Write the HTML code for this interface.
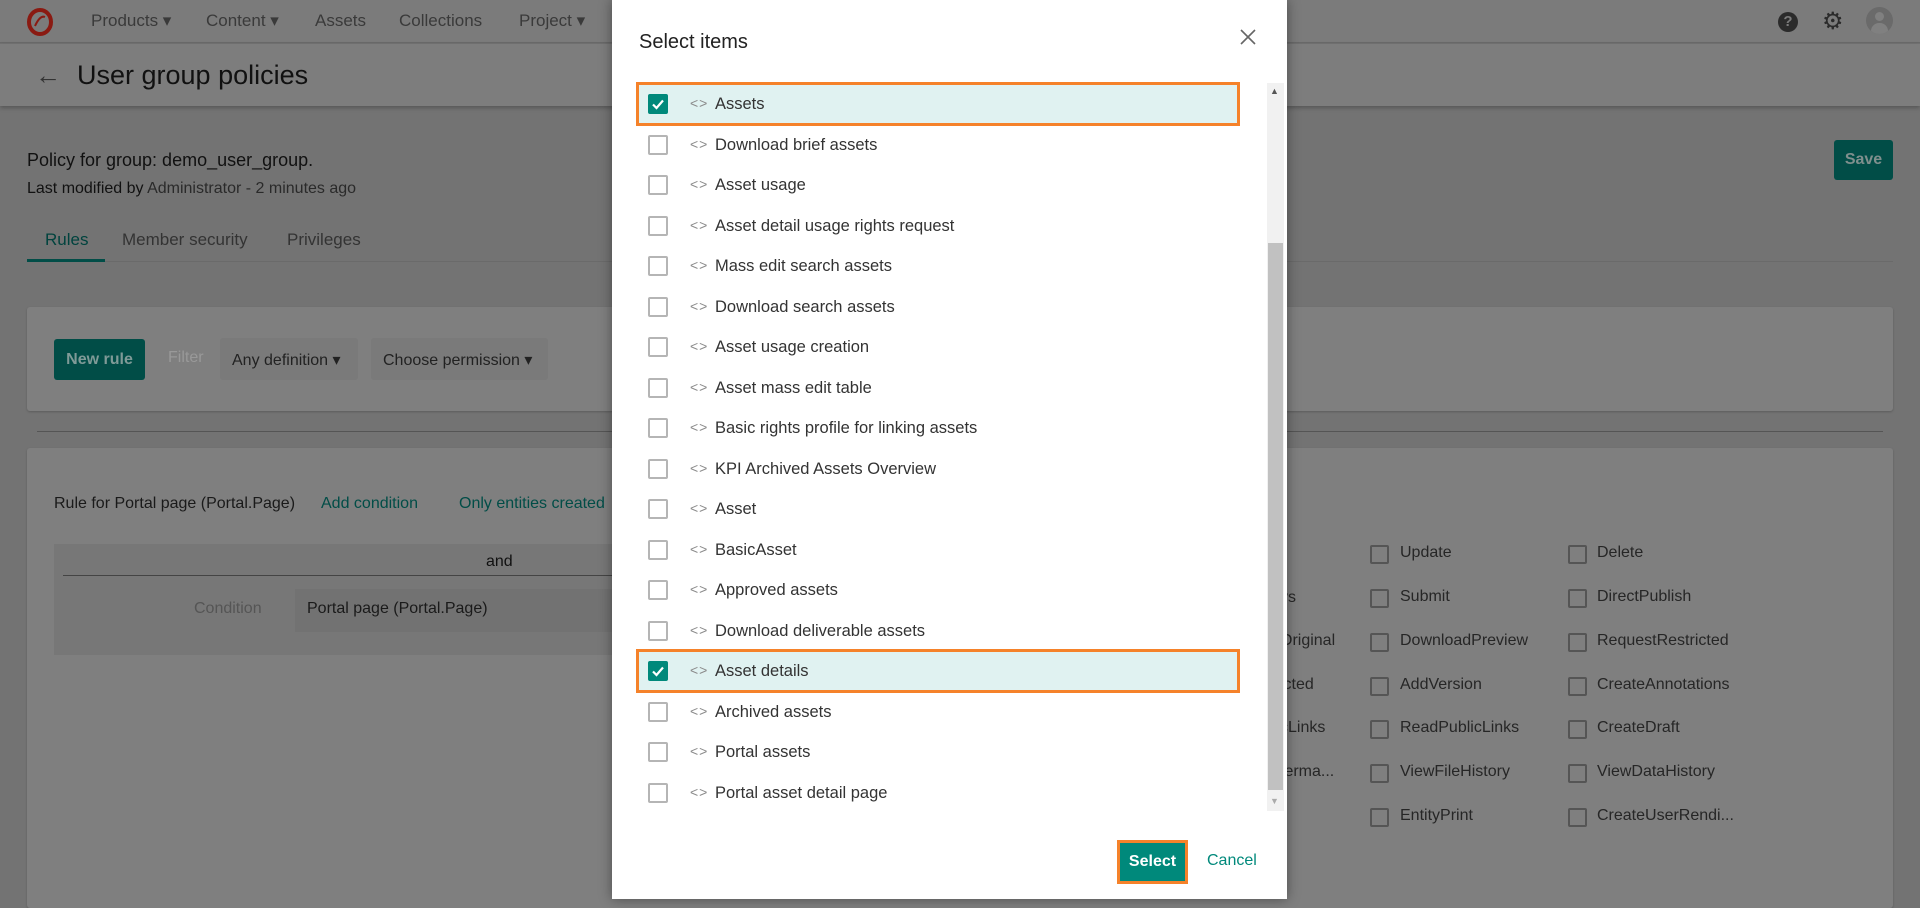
<!DOCTYPE html>
<html><head><meta charset="utf-8"><style>
*{box-sizing:border-box;margin:0;padding:0}
body{width:1920px;height:899px;overflow:hidden;background:#737373;font-family:"Liberation Sans",sans-serif;position:relative;color:#1a1a1a}
.a{position:absolute;white-space:nowrap}
.nav{left:0;top:0;width:1920px;height:43px;background:#7b7b7b;border-bottom:1px solid #6a6a6a}
.navi{top:11px;font-size:17px;color:#3a3a3a}
.hdr{left:0;top:44px;width:1920px;height:62px;background:#7d7d7d;box-shadow:0 2px 4px rgba(0,0,0,.25)}
.card{background:#7f7f7f;border-radius:3px;box-shadow:0 1px 2px rgba(0,0,0,.2)}
.cb{width:19px;height:19px;border:2px solid #555;border-radius:2px;background:transparent}
.pl{font-size:16px;color:#262626}
.modal{left:612px;top:0;width:675px;height:899px;background:#fff}
.row{position:absolute;left:25px;width:602px;height:42px}
.row .c{position:absolute;left:11px;top:11px;width:20px;height:20px;border:2px solid #b5b5b5;border-radius:2px;background:#fff}
.row .g{position:absolute;left:53px;top:12px;font-size:14px;color:#8a8a8a;letter-spacing:1px}
.row .t{position:absolute;left:78px;top:12px;font-size:16.5px;color:#333}
.row.s{background:#e0f2f1;outline:3px solid #f5822a;outline-offset:-2px}
.row.s .c{background:#00897b;border-color:#00897b}
</style></head><body>
<div class="a nav"></div>
<svg class="a" style="left:26px;top:7px" width="28" height="30" viewBox="0 0 28 30"><ellipse cx="14" cy="15" rx="11" ry="12" fill="none" stroke="#8a1a12" stroke-width="4"/><path d="M9 19 Q14 8 19 10" fill="none" stroke="#8a1a12" stroke-width="2"/></svg>
<div class="a navi" style="left:91px">Products ▾</div>
<div class="a navi" style="left:206px">Content ▾</div>
<div class="a navi" style="left:315px">Assets</div>
<div class="a navi" style="left:399px">Collections</div>
<div class="a navi" style="left:519px">Project ▾</div>
<div class="a" style="left:1778px;top:12px;width:20px;height:20px;border-radius:50%;background:#2b2b2b;color:#7b7b7b;font-size:15px;font-weight:bold;text-align:center;line-height:20px">?</div>
<div class="a" style="left:1822px;top:7px;font-size:24px;color:#2b2b2b">⚙</div>
<div class="a" style="left:1866px;top:7px;width:27px;height:27px;border-radius:50%;background:#6a6a6a;overflow:hidden"><div class="a" style="left:9px;top:5px;width:9px;height:9px;border-radius:50%;background:#808080"></div><div class="a" style="left:5px;top:16px;width:17px;height:12px;border-radius:8px 8px 0 0;background:#808080"></div></div>
<div class="a hdr"></div>
<div class="a" style="left:35px;top:60px;font-size:26px;color:#333">←</div>
<div class="a" style="left:77px;top:60px;font-size:27px;color:#111">User group policies</div>
<div class="a" style="left:27px;top:150px;font-size:18px;color:#111">Policy for group: demo_user_group.</div>
<div class="a" style="left:27px;top:180px;font-size:16px;color:#111">Last modified by <span style="color:#2a2a2a">Administrator - 2 minutes ago</span></div>
<div class="a" style="left:1834px;top:140px;width:59px;height:40px;background:#014d47;border-radius:3px;color:#7f8f8d;font-weight:bold;font-size:16px;text-align:center;line-height:40px">Save</div>
<div class="a" style="left:45px;top:230px;font-size:17px;color:#00433e">Rules</div>
<div class="a" style="left:122px;top:230px;font-size:17px;color:#333">Member security</div>
<div class="a" style="left:287px;top:230px;font-size:17px;color:#333">Privileges</div>
<div class="a" style="left:27px;top:261px;width:1866px;height:1px;background:#6a6a6a"></div>
<div class="a" style="left:27px;top:259px;width:78px;height:3px;background:#014d47"></div>
<div class="a card" style="left:27px;top:307px;width:1866px;height:104px"></div>
<div class="a" style="left:54px;top:339px;width:91px;height:41px;background:#014d47;border-radius:3px;color:#7f9a97;font-weight:bold;font-size:16px;text-align:center;line-height:41px">New rule</div>
<div class="a" style="left:168px;top:349px;font-size:16px;color:#999">Filter</div>
<div class="a" style="left:220px;top:338px;width:138px;height:42px;background:#7a7a7a;border-radius:3px;font-size:16px;color:#222;padding:12px 12px">Any definition ▾</div>
<div class="a" style="left:371px;top:338px;width:177px;height:42px;background:#7a7a7a;border-radius:3px;font-size:16px;color:#222;padding:12px 12px">Choose permission ▾</div>
<div class="a" style="left:37px;top:431px;width:1846px;height:1px;background:#555"></div>
<div class="a card" style="left:27px;top:448px;width:1866px;height:460px"></div>
<div class="a" style="left:54px;top:495px;font-size:16px;color:#1a1a1a">Rule for Portal page (Portal.Page)</div>
<div class="a" style="left:321px;top:495px;font-size:16px;color:#014d47">Add condition</div>
<div class="a" style="left:459px;top:495px;font-size:16px;color:#014d47">Only entities created</div>
<div class="a" style="left:54px;top:544px;width:600px;height:111px;background:#777"></div>
<div class="a" style="left:63px;top:575px;width:600px;height:1px;background:#444"></div>
<div class="a" style="left:486px;top:553px;font-size:16px;color:#111">and</div>
<div class="a" style="left:194px;top:600px;font-size:16px;color:#555">Condition</div>
<div class="a" style="left:295px;top:589px;width:360px;height:43px;background:#727272"></div>
<div class="a" style="left:307px;top:600px;font-size:16px;color:#1a1a1a">Portal page (Portal.Page)</div>
<div class="a pl" style="left:1280px;top:589px">ys</div>
<div class="a pl" style="left:1280px;top:632px">Original</div>
<div class="a pl" style="left:1280px;top:676px">icted</div>
<div class="a pl" style="left:1280px;top:719px">cLinks</div>
<div class="a pl" style="left:1280px;top:763px">terma...</div>
<div class="a cb" style="left:1370px;top:545px"></div><div class="a pl" style="left:1400px;top:544px">Update</div>
<div class="a cb" style="left:1568px;top:545px"></div><div class="a pl" style="left:1597px;top:544px">Delete</div>
<div class="a cb" style="left:1370px;top:589px"></div><div class="a pl" style="left:1400px;top:588px">Submit</div>
<div class="a cb" style="left:1568px;top:589px"></div><div class="a pl" style="left:1597px;top:588px">DirectPublish</div>
<div class="a cb" style="left:1370px;top:633px"></div><div class="a pl" style="left:1400px;top:632px">DownloadPreview</div>
<div class="a cb" style="left:1568px;top:633px"></div><div class="a pl" style="left:1597px;top:632px">RequestRestricted</div>
<div class="a cb" style="left:1370px;top:677px"></div><div class="a pl" style="left:1400px;top:676px">AddVersion</div>
<div class="a cb" style="left:1568px;top:677px"></div><div class="a pl" style="left:1597px;top:676px">CreateAnnotations</div>
<div class="a cb" style="left:1370px;top:720px"></div><div class="a pl" style="left:1400px;top:719px">ReadPublicLinks</div>
<div class="a cb" style="left:1568px;top:720px"></div><div class="a pl" style="left:1597px;top:719px">CreateDraft</div>
<div class="a cb" style="left:1370px;top:764px"></div><div class="a pl" style="left:1400px;top:763px">ViewFileHistory</div>
<div class="a cb" style="left:1568px;top:764px"></div><div class="a pl" style="left:1597px;top:763px">ViewDataHistory</div>
<div class="a cb" style="left:1370px;top:808px"></div><div class="a pl" style="left:1400px;top:807px">EntityPrint</div>
<div class="a cb" style="left:1568px;top:808px"></div><div class="a pl" style="left:1597px;top:807px">CreateUserRendi...</div>

<div class="a modal" style="box-shadow:0 0 12px rgba(0,0,0,.4)">
<div class="a" style="left:27px;top:31px;font-size:20px;color:#222">Select items</div>
<svg class="a" style="left:628px;top:29px" width="16" height="16" viewBox="0 0 16 16"><path d="M1 1L15 15M15 1L1 15" stroke="#666" stroke-width="1.6"/></svg>
<div class="a" style="left:655px;top:83px;width:17px;height:728px;background:#f1f1f1"></div>
<div class="a" style="left:656px;top:243px;width:15px;height:547px;background:#c1c1c1"></div>
<div class="a" style="left:658px;top:86px;font-size:9px;color:#555">▲</div>
<div class="a" style="left:658px;top:796px;font-size:9px;color:#aaa">▼</div>
<div id="list"></div>
<div class="a" style="left:505px;top:840px;width:71px;height:44px;border:3px solid #f5822a;background:#00897b;color:#fff;font-weight:bold;font-size:16px;text-align:center;line-height:38px">Select</div>
<div class="a" style="left:595px;top:852px;font-size:16px;color:#00897b">Cancel</div>
</div>
<script>
var n=["Assets","Download brief assets","Asset usage","Asset detail usage rights request","Mass edit search assets","Download search assets","Asset usage creation","Asset mass edit table","Basic rights profile for linking assets","KPI Archived Assets Overview","Asset","BasicAsset","Approved assets","Download deliverable assets","Asset details","Archived assets","Portal assets","Portal asset detail page"];
var h="";n.forEach(function(t,i){var s=(i==0||i==14);h+='<div class="row'+(s?' s':'')+'" style="top:'+(83+40.5*i)+'px"><div class="c">'+(s?'<svg width="16" height="16" viewBox="0 0 16 16" style="position:absolute;left:0;top:0"><path d="M3 8.5L6.5 12L13 4.5" fill="none" stroke="#fff" stroke-width="2.2"/></svg>':'')+'</div><span class="g">&lt;&gt;</span><span class="t">'+t+'</span></div>';});
document.getElementById("list").innerHTML=h;
</script>
</body></html>
